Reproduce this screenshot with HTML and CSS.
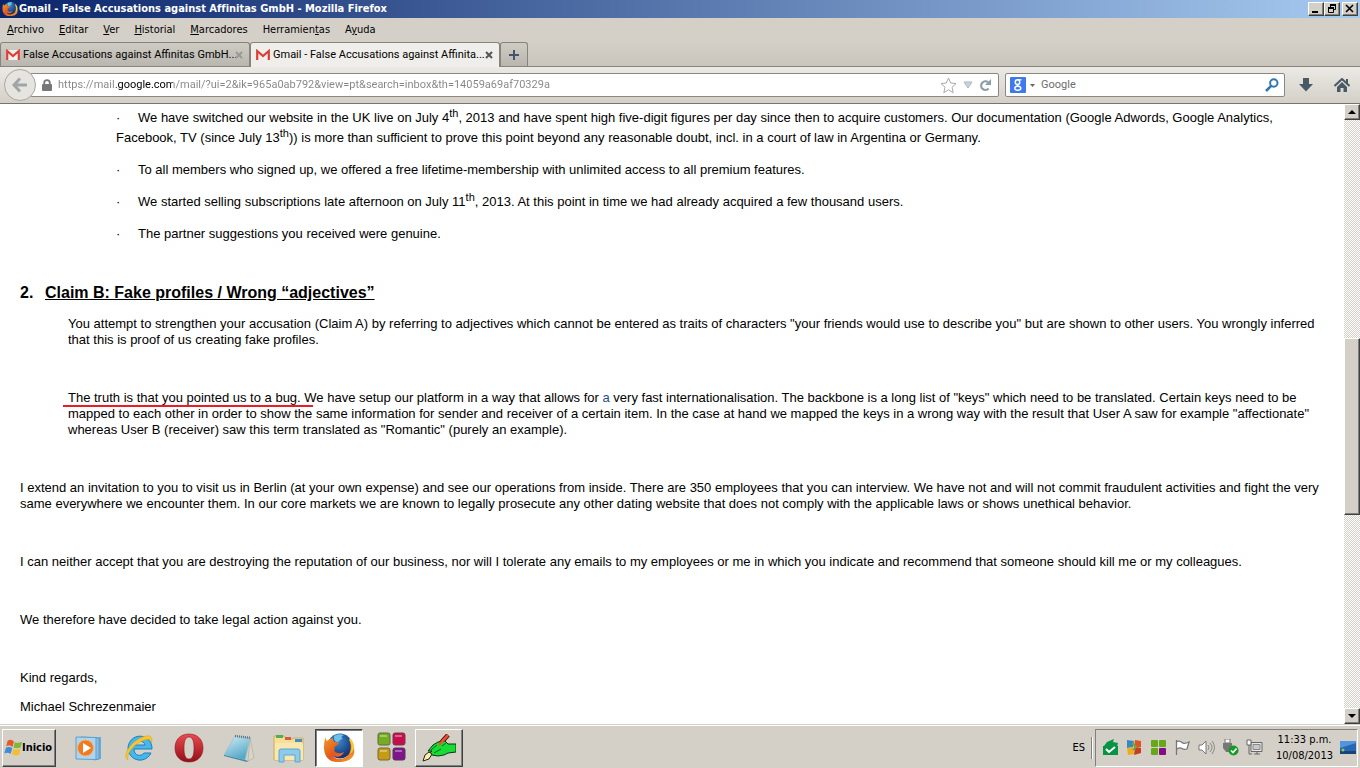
FILE: index.html
```html
<!DOCTYPE html>
<html lang="es">
<head>
<meta charset="utf-8">
<title>Gmail - False Accusations against Affinitas GmbH - Mozilla Firefox</title>
<link rel="stylesheet" href="styles.css">
</head>
<body>
<svg class="defs" width="0" height="0" aria-hidden="true">
  <defs>
    <symbol id="gmail" viewBox="0 0 14 12"><path d="M0 1h14v10H0z" fill="#f3f1ee"/><path d="M1.200 11V2l5.800 5 5.800-5v9" fill="none" stroke="#dc3f35" stroke-width="2.200"/></symbol>
    <symbol id="firefox" viewBox="0 0 32 32">
      <circle cx="17" cy="14" r="12.500" fill="url(#ffblue)"/>
      <path d="M11 4c3-2 7-2 10-1-3 1-3 3-1 4-4 0-3 3-6 3-3-1-3-4-3-6z" fill="#6fc0ea"/>
      <path d="M3 5c0 2 0 3 1 4 2-2 4-2 6-3 0 2 0 3 1 4 2 0 4 0 5 1-1 2-4 3-5 5 1 0 1 2 0 2 2 4 6 4 10 2-2 5-8 6-12 3 4 6 13 5 17-1 2-4 2-8 1-12 4 3 5 8 4 12-2 6-8 8-15 8C6 31 1 24 1 16 1 12 1 9 3 5z" fill="url(#fforange)"/>
      <path d="M26 8c3 4 3 9 1 14 3-2 4-5 4-8 0-3-2-6-5-9 1 1 1 2 0 3z" fill="#f8cc35"/>
    </symbol>
    <radialGradient id="ffblue" cx=".4" cy=".3" r=".7"><stop stop-color="#3d8cd0"/><stop offset="1" stop-color="#122e70"/></radialGradient>
    <linearGradient id="fforange" x1="0" y1="0" x2="1" y2="1"><stop stop-color="#f39a22"/><stop offset=".5" stop-color="#e3561d"/><stop offset="1" stop-color="#f5a52b"/></linearGradient>
    <symbol id="winflag" viewBox="0 0 20 20">
      <path d="M4 2c3-2 5-1 7 1L9.500 9C7 7 5 7 2.500 8z" fill="#e4582b"/>
      <path d="M12 3.500c3 1 5 1 8-.5l-1.500 6.500c-3 1-5 1-8 0z" fill="#7db83a"/>
      <path d="M2.200 9.500c3-1 5-1 7 .5L7.500 16.500C5 15 3 15 .3 16z" fill="#3d8dd6"/>
      <path d="M10.300 11c3 1 5 1 8 0l-1.500 6.500c-3 1-5 1-8-.5z" fill="#f5bd2c"/>
    </symbol>
    <symbol id="up" viewBox="0 0 8 4"><path d="M4 0l4 4H0z" fill="#000"/></symbol>
    <symbol id="down" viewBox="0 0 8 4"><path d="M0 0h8L4 4z" fill="#000"/></symbol>
  </defs>
</svg>

<header class="titlebar">
  <svg class="title-icon"><use href="#firefox"/></svg>
  <h1 class="title">Gmail - False Accusations against Affinitas GmbH - Mozilla Firefox</h1>
  <div class="window-buttons">
    <button class="win-btn" aria-label="Minimizar"><svg width="12" height="10"><path d="M2 7h6v2H2z"/></svg></button>
    <button class="win-btn" aria-label="Restaurar"><svg width="12" height="10"><path d="M4 0h6v2H4zM2 3h6v2H2z"/><path d="M4.500 1v2M9.500 1v4.500H8M2.500 4v4.500h5V4" fill="none" stroke="#000"/></svg></button>
    <button class="win-btn win-close" aria-label="Cerrar"><svg width="12" height="10"><path d="M2 1l7 7M9 1L2 8" stroke="#000" stroke-width="1.600"/></svg></button>
  </div>
</header>

<nav class="menubar">
  <button><u>A</u>rchivo</button><button><u>E</u>ditar</button><button><u>V</u>er</button><button><u>H</u>istorial</button><button><u>M</u>arcadores</button><button>Herramien<u>t</u>as</button><button>A<u>y</u>uda</button>
</nav>

<div class="tabs">
  <div class="tab">
    <svg class="favicon"><use href="#gmail"/></svg>
    <button class="tab-label">False Accusations against Affinitas GmbH...</button>
    <button class="tab-close faded" aria-label="Cerrar pestaña"><svg width="8" height="8"><path d="M1 1l6 6M7 1L1 7" stroke="currentColor" stroke-width="2"/></svg></button>
  </div>
  <div class="tab active">
    <svg class="favicon"><use href="#gmail"/></svg>
    <button class="tab-label">Gmail - False Accusations against Affinita...</button>
    <button class="tab-close" aria-label="Cerrar pestaña"><svg width="8" height="8"><path d="M1 1l6 6M7 1L1 7" stroke="currentColor" stroke-width="2"/></svg></button>
  </div>
  <button class="new-tab" aria-label="Nueva pestaña"><svg width="10" height="10"><path d="M5 0v10M0 5h10" stroke="#44576a" stroke-width="2"/></svg></button>
</div>

<div class="navbar">
  <button class="back" aria-label="Atrás"><svg width="18" height="16" viewBox="0 0 18 16"><path d="M9 1.500L3 8l6 6.500M3 8h13" fill="none" stroke="#a0a6a8" stroke-width="3"/></svg></button>
  <div class="url-box">
    <svg width="10" height="12"><path d="M2.200 6V4a2.800 2.800 0 0 1 5.600 0v2" fill="none" stroke="#777" stroke-width="1.800"/><rect y="5" width="10" height="7" rx="1" fill="#777"/></svg>
    <input class="url" aria-label="Dirección" value="https://mail.google.com/mail/?ui=2&amp;ik=965a0ab792&amp;view=pt&amp;search=inbox&amp;th=14059a69af70329a">
    <button aria-label="Añadir a marcadores"><svg width="17" height="17"><path d="M8.500 1l2.200 5 5.300.6-4 3.600 1.200 5.500-4.700-2.900-4.700 2.900L5 10.200 1 6.600 6.300 6z" fill="#fff" stroke="#aaa"/></svg></button>
    <button aria-label="Historial"><svg width="10" height="8"><path d="M1 1h8L5 7z" fill="#c9d5da" stroke="#aab8be"/></svg></button>
    <button aria-label="Recargar"><svg width="13" height="13"><path d="M9.600 9.600A4.300 4.300 0 1 1 9 3.200" fill="none" stroke="#8c9ea8" stroke-width="2.200"/><path d="M12 0v6H6z" fill="#8c9ea8"/></svg></button>
  </div>
  <div class="search-box">
    <button class="engine" aria-label="Motor de búsqueda"><svg width="16" height="16"><rect width="16" height="16" rx="1" fill="#3e79ee"/><ellipse cx="7.500" cy="5.200" rx="2.200" ry="2.400" fill="none" stroke="#fff" stroke-width="1.500"/><path d="M8 2.800h3.500" stroke="#fff" stroke-width="1.300"/><path d="M8 7.500q-1.500 1 .5 1.800" fill="none" stroke="#fff" stroke-width="1.300"/><ellipse cx="7.800" cy="11.300" rx="3" ry="2" fill="none" stroke="#fff" stroke-width="1.400"/></svg><svg width="5" height="3"><path d="M0 0h5L2.500 3z" fill="#666"/></svg></button>
    <input class="search" aria-label="Buscar" value="Google">
    <button aria-label="Buscar"><svg width="14" height="14"><circle cx="8.800" cy="5" r="3.700" fill="none" stroke="#2d78b4" stroke-width="2"/><path d="M6.200 7.800L1 13" stroke="#2d78b4" stroke-width="2.600"/></svg></button>
  </div>
  <button class="tool" aria-label="Descargas"><svg width="14" height="14"><path d="M4 0h6v6h4l-7 7.500L0 6h4z" fill="#495a67"/></svg></button>
  <button class="tool" aria-label="Inicio"><svg width="16" height="14"><path d="M.5 8L8 1l7.500 7" fill="none" stroke="#495a67" stroke-width="2"/><path d="M12 1h2v4h-2zM8 4l5 5v5H9.500v-4h-3v4H3V9z" fill="#495a67"/></svg></button>
</div>

<div class="viewport">
  <main class="page">
    <ul class="points">
      <li class="tall"><span class="dot">·</span>We have switched our website in the UK live on July 4<sup>th</sup>, 2013 and have spent high five-digit figures per day since then to acquire customers. Our documentation (Google Adwords, Google Analytics,<br>Facebook, TV (since July 13<sup>th</sup>)) is more than sufficient to prove this point beyond any reasonable doubt, incl. in a court of law in Argentina or Germany.</li>
      <li><span class="dot">·</span>To all members who signed up, we offered a free lifetime-membership with unlimited access to all premium features.</li>
      <li class="tall"><span class="dot">·</span>We started selling subscriptions late afternoon on July 11<sup>th</sup>, 2013. At this point in time we had already acquired a few thousand users.</li>
      <li><span class="dot">·</span>The partner suggestions you received were genuine.</li>
    </ul>
    <h2 class="claim"><span class="num">2.</span><u>Claim B: Fake profiles / Wrong “adjectives”</u></h2>
    <p class="indent">You attempt to strengthen your accusation (Claim A) by referring to adjectives which cannot be entered as traits of characters "your friends would use to describe you" but are shown to other users. You wrongly inferred<br>that this is proof of us creating fake profiles.</p>
    <p class="indent spaced"><span class="marked">The truth is that you pointed us to a bug. </span>We have setup our platform in a way that allows for <span class="blue">a</span> very fast internationalisation. The backbone is a long list of "keys" which need to be translated. Certain keys need to be<br>mapped to each other in order to show the same information for sender and receiver of a certain item. In the case at hand we mapped the keys in a wrong way with the result that User A saw for example "affectionate"<br>whereas User B (receiver) saw this term translated as "Romantic" (purely an example).</p>
    <p class="spaced">I extend an invitation to you to visit us in Berlin (at your own expense) and see our operations from inside. There are 350 employees that you can interview. We have not and will not commit fraudulent activities and fight the very<br>same everywhere we encounter them. In our core markets we are known to legally prosecute any other dating website that does not comply with the applicable laws or shows unethical behavior.</p>
    <p class="spaced">I can neither accept that you are destroying the reputation of our business, nor will I tolerate any emails to my employees or me in which you indicate and recommend that someone should kill me or my colleagues.</p>
    <p class="spaced">We therefore have decided to take legal action against you.</p>
    <p class="spaced">Kind regards,</p>
    <p>Michael Schrezenmaier</p>
  </main>
  <div class="scrollbar">
    <button class="scroll-btn" aria-label="Subir"><svg width="8" height="4"><use href="#up"/></svg></button>
    <div class="track-before"></div>
    <div class="thumb"></div>
    <div class="track-after"></div>
    <button class="scroll-btn" aria-label="Bajar"><svg width="8" height="4"><use href="#down"/></svg></button>
  </div>
</div>

<footer class="taskbar">
  <button class="start"><svg width="18" height="18"><use href="#winflag"/></svg>Inicio</button>
  <div class="launchers">
    <button class="launcher" aria-label="Reproductor multimedia"><svg width="28" height="28" viewBox="0 0 28 28"><path d="M10 4l16-1v22l-7 1z" fill="#6fa9d4"/><path d="M6 3l18 1v21l-5 1z" fill="#8ec1e6" stroke="#5d9bca"/><path d="M1 3l20 .5v22L1 25z" fill="#add5ef" stroke="#5e9fcd"/><circle cx="10.500" cy="14" r="8" fill="#ef7a22" stroke="#fbb26d"/><path d="M8 9v10l8-5z" fill="#fff"/></svg></button>
    <button class="launcher" aria-label="Internet Explorer"><svg width="32" height="30" viewBox="0 0 32 30"><path d="M28 20A12 12 0 1 1 29 16H11c0 7 7 8 10 4zM11 12h11c-1-5-9-5-11 0z" fill="#45b7ea" fill-rule="evenodd" stroke="#1b7fc0"/><path d="M5 27C-1 24 6 12 14 7c8-5 15-6 15 0 0 1 0 2-1 3 1-4-2-5-9-2C10 12 3 21 5 27z" fill="#f8c62e" stroke="#d9a118" stroke-width=".5"/></svg></button>
    <button class="launcher" aria-label="Opera"><svg width="30" height="30" viewBox="0 0 30 30"><defs><linearGradient id="opera" x2="0" y2="1"><stop stop-color="#ed4b50"/><stop offset="1" stop-color="#930e18"/></linearGradient></defs><path d="M15 1C6 1 1 7 1 15s5 14 14 14 14-6 14-14S24 1 15 1zm0 3c4 0 5 5 5 11s-1 11-5 11-5-5-5-11 1-11 5-11z" fill="url(#opera)" fill-rule="evenodd" stroke="#8e1720" stroke-width=".6"/></svg></button>
    <button class="launcher" aria-label="Bloc de notas"><svg width="32" height="30" viewBox="0 0 32 30"><defs><linearGradient id="note" x1="0" x2=".5" y2="1"><stop stop-color="#d4f0f7"/><stop offset="1" stop-color="#55a7c7"/></linearGradient></defs><path d="M27 5l4 20-6 3z" fill="#d9d4c8" stroke="#a6a08f" stroke-width=".5"/><path d="M12 3l15 2-5 22L1 22z" fill="url(#note)" stroke="#8ebccb" stroke-width=".6"/><path d="M1 22l21 5 3 1-1 1-23-6z" fill="#3d89a5"/><path d="M12 3l16 2" stroke="#64747b" stroke-width="2.500" stroke-dasharray="1 1"/></svg></button>
    <button class="launcher" aria-label="Explorador"><svg width="32" height="30" viewBox="0 0 32 30"><path d="M1 3h10l2 3h7l1-1h9v22H1z" fill="#f5e09a" stroke="#cfae58"/><path d="M3 2h7v3H3z" fill="#4db055"/><path d="M12 4h6v3h-6z" fill="#d95b3a"/><path d="M22 6h7v3h-7z" fill="#3e8ed0"/><path d="M2 10h28v17H2z" fill="#f9e8ae"/><path d="M6 29V18q0-2 2-2h17q2 0 2 2v11h-5v-7H11v7z" fill="#8ecaec" stroke="#5ca6d2"/></svg></button>
    <button class="launcher current" aria-label="Mozilla Firefox"><svg width="32" height="32"><use href="#firefox"/></svg></button>
    <button class="launcher apps" aria-label="Aplicación"><svg width="30" height="30"><rect x="2" y="2" width="12" height="12" rx="2" fill="#75ad20" stroke="#5d6b41"/><rect x="17" y="2" width="12" height="12" rx="2" fill="#c70d4c" stroke="#733b50"/><rect x="2" y="17" width="12" height="12" rx="2" fill="#c49c14" stroke="#766636"/><rect x="17" y="17" width="12" height="12" rx="2" fill="#81148b" stroke="#543559"/><path d="M4 5h7M19 5h7M4 20h7M19 20h7" stroke="#fff" stroke-opacity=".35" stroke-width="2"/></svg></button>
    <button class="launcher raised" aria-label="Editor"><svg width="34" height="28" viewBox="0 0 34 28"><path d="M26 1L10 19" stroke="#40100c" stroke-width="4.500"/><path d="M26 1L10 19" stroke="#ef5135" stroke-width="2.500"/><path d="M6 17l5-6 5-3 7-1 3 3h8v8l-8 1-4 2-6 1-6-1-3-1 3-3h-4z" fill="#18dc35" stroke="#06380c"/><path d="M9 16l6-5M12 19l7-4M24 9l-4 3" stroke="#076b13"/><path d="M26 1l-9 10" stroke="#ef5135" stroke-width="2.500"/><path d="M7 18l-4 3-2 6 6-2 3-5z" fill="#ffefa3" stroke="#222"/></svg></button>
  </div>
  <span class="lang">ES</span>
  <div class="tray">
    <svg width="17" height="17" viewBox="0 0 17 17"><path d="M1 7h15v9H1z" fill="#089344"/><path d="M2 7l3-4 7-3-1 3 5 1-1 4z" fill="#079447"/><path d="M4 10l3 3 6-5" fill="none" stroke="#fff" stroke-width="2"/></svg>
    <svg width="17" height="17" viewBox="0 0 17 17"><path d="M1 1l7 1-1 6-6 1z" fill="#3489be"/><path d="M9 1l6 1v6l-7 1z" fill="#e05324"/><path d="M1 9l6-1 1 7-6 1z" fill="#ecac1d"/><path d="M9 8l6 1v5l-7 2z" fill="#c83c22"/><path d="M6 4l4 4-3 3" fill="none" stroke="#69a744" stroke-width="2"/></svg>
    <svg width="17" height="17"><rect x="1" y="1" width="7" height="7" rx="1" fill="#65a91b"/><rect x="9" y="1" width="7" height="7" rx="1" fill="#65a91b"/><rect x="1" y="9" width="7" height="7" rx="1" fill="#65a91b"/><rect x="9" y="9" width="7" height="7" rx="1" fill="#850b83"/></svg>
    <svg width="17" height="17"><path d="M2.500 1v15M3 2.500q3-1 5 1t7-.5l-2 7q-3 1-5-.5t-5 .5" fill="#fff" stroke="#777" stroke-width="1.300"/></svg>
    <svg width="17" height="17"><path d="M1 6h3l4-4v13l-4-4H1z" fill="#fff" stroke="#777"/><path d="M10 6q2 2.500 0 5M12 4q4 4.500 0 9M14 2q5 6.500 0 13" fill="none" stroke="#888"/></svg>
    <svg width="17" height="17"><path d="M3 0h5v4H3z" fill="#fff" stroke="#777"/><path d="M1 4h9v5l-3 4H4L1 9z" fill="#777"/><circle cx="11.500" cy="11.500" r="5" fill="#159b25"/><path d="M9 11.500l2 2 3.500-4" fill="none" stroke="#fff" stroke-width="1.600"/></svg>
    <svg width="17" height="17"><path d="M5 3.500h11v9H5z" fill="#e7e7e5" stroke="#666"/><path d="M7 5.500h7v5H7z" fill="#c8cac8" stroke="#888"/><path d="M1 1h4v5H1z" fill="#fff" stroke="#666"/><path d="M3 6v9h3M8 15h6M11 13v2" fill="none" stroke="#666"/></svg>
    <time class="clock"><span>11:33 p.m.</span><span>10/08/2013</span></time>
    <button class="show-desktop" aria-label="Mostrar escritorio"><svg width="16" height="14"><path d="M0 0h16v11H0z" fill="#2668b6"/><path d="M0 7L16 2V0H0z" fill="#5395db"/><path d="M0 10h16v3H0z" fill="#174478"/><circle cx="3" cy="9" r="1.500" fill="#8acb47"/></svg></button>
  </div>
</footer>
</body>
</html>
```
FILE: styles.css
```css
* { box-sizing: border-box; }
body {
  margin: 0;
  height: 100vh;
  display: flex;
  flex-direction: column;
  overflow: hidden;
  background: #d4d0c8;
  color: #000;
  font: 11px/14px "DejaVu Sans Condensed", "DejaVu Sans", sans-serif;
}
button {
  margin: 0;
  padding: 0;
  border: 0;
  background: none;
  color: inherit;
  font: inherit;
  white-space: nowrap;
}
input {
  min-width: 0;
  border: 0;
  padding: 0;
  outline: 0;
  background: none;
  font: inherit;
}
svg { display: block; flex: none; }
.defs { position: absolute; }

/* window frame */
.titlebar {
  flex: none;
  height: 18px;
  display: flex;
  align-items: center;
  padding: 0 2px;
  gap: 1px;
  background: linear-gradient(90deg, #0a246a, #a6caf0);
}
.title-icon { width: 16px; height: 16px; }
.title {
  flex: 1;
  margin: 0;
  color: #fff;
  font-size: 11px;
  line-height: 18px;
  white-space: nowrap;
}
.window-buttons { display: flex; }
.win-btn {
  width: 16px;
  height: 14px;
  display: flex;
  align-items: center;
  justify-content: center;
}
.win-close { margin-left: 2px; }
.win-btn, .scroll-btn, .thumb {
  background: #d4d0c8;
  border: 1px solid;
  border-color: #fff #404040 #404040 #fff;
  box-shadow: inset -1px -1px #808080;
}
.menubar {
  flex: none;
  height: 24px;
  display: flex;
  align-items: center;
  padding: 0 7px;
  gap: 15px;
}

/* tabs */
.tabs {
  flex: none;
  height: 25px;
  display: flex;
  background: linear-gradient(#d4d0c8, #c9c5bc);
  border-bottom: 1px solid #87847e;
}
.tabs, .navbar { font-family: Roboto, "Noto Sans", sans-serif; }
.tab, .new-tab {
  border: 1px solid #87847e;
  border-bottom: 0;
  border-radius: 3px 3px 0 0;
  background: linear-gradient(#cfccc4, #b9b6af);
}
.tab {
  width: 250px;
  display: flex;
  align-items: center;
  padding: 0 6px 0 5px;
  gap: 3px;
}
.tab.active {
  margin-bottom: -1px;
  background: #f0eeea;
}
.favicon { width: 14px; height: 12px; }
.tab-label { flex: 1; min-width: 0; text-align: left; }
.tab-close { color: #555; }
.faded { color: #999; }
.new-tab {
  width: 28px;
  display: flex;
  align-items: center;
  justify-content: center;
}

/* toolbar */
.navbar {
  flex: none;
  height: 37px;
  display: flex;
  align-items: center;
  padding: 0 10px 0 4px;
  background: linear-gradient(#eceae5, #d4d0c8);
  border-bottom: 1px solid #77746f;
}
.back {
  z-index: 1;
  width: 32px;
  height: 32px;
  display: flex;
  align-items: center;
  justify-content: center;
  border: 1px solid #aaa7a1;
  border-radius: 50%;
  background: #e6e4df;
}
.url-box, .search-box {
  height: 24px;
  display: flex;
  align-items: center;
  border: 1px solid #8b8882;
  border-radius: 2px;
  background: #fff;
}
.url-box {
  flex: 1;
  margin-left: -6px;
  padding: 0 6px 0 11px;
  gap: 6px;
}
.url {
  flex: 1;
  background: linear-gradient(90deg, #858585 58px, #000 58px, #000 115px, #858585 115px);
  background-clip: text;
  -webkit-background-clip: text;
  color: transparent;
}
.search-box {
  width: 280px;
  margin-left: 6px;
  margin-right: 6px;
  padding: 0 5px 0 4px;
  gap: 6px;
}
.engine { display: flex; align-items: center; gap: 4px; }
.search { flex: 1; color: #6d6d6d; }
.tool {
  width: 30px;
  display: flex;
  justify-content: center;
}
.tool + .tool { margin-left: 6px; margin-right: -7px; }

/* message */
.viewport {
  flex: 1;
  min-height: 0;
  display: flex;
  background: #fff;
}
.page {
  flex: 1;
  min-width: 0;
  overflow: hidden;
  padding: 4px 0 0 20px;
  font: 13px/16px "Liberation Sans", Arial, sans-serif;
  white-space: nowrap;
}
.points { margin: 0 0 42px; padding: 0 0 0 96px; list-style: none; }
.points li { margin-bottom: 14px; }
.points .tall { line-height: 20px; }
.dot { display: inline-block; width: 22px; }
sup { font-size: 11px; line-height: 0; }
.claim { margin: 0 0 14px; font-size: 16px; line-height: 18px; }
.num { display: inline-block; width: 25px; }
.page p { margin: 0 0 13px; }
.page .indent { padding-left: 48px; }
.page .spaced { margin-top: 42px; }
.blue { color: #1f4e8c; }
.marked { position: relative; }
.marked::after {
  content: "";
  position: absolute;
  left: -5px;
  right: -9px;
  bottom: -2px;
  height: 2px;
  background: #ed1c24;
}

/* scrollbar */
.scrollbar {
  width: 16px;
  display: flex;
  flex-direction: column;
  background: repeating-conic-gradient(#d4d0c8 0 25%, #fff 0 50%) 0 0 / 2px 2px;
}
.scroll-btn {
  height: 16px;
  display: flex;
  align-items: center;
  justify-content: center;
}
.track-before { flex: 218; }
.thumb { flex: 176; }
.track-after { flex: 193; }

/* taskbar */
.taskbar {
  flex: none;
  height: 44px;
  display: flex;
  align-items: center;
  padding: 2px 2px 0;
  border-top: 1px solid #d4d0c8;
  box-shadow: inset 0 1px #fff;
}
.start {
  width: 54px;
  height: 38px;
  display: flex;
  align-items: center;
  padding-left: 1px;
  font-weight: bold;
}
.start, .raised {
  border: 1px solid;
  border-color: #fff #404040 #404040 #fff;
  box-shadow: inset -1px -1px #808080;
}
.launchers { flex: 1; display: flex; gap: 2px; margin-left: 9px; }
.launcher {
  width: 48px;
  height: 38px;
  display: flex;
  align-items: center;
  justify-content: center;
}
.current {
  background: #fff;
  border: 1px solid;
  border-color: #404040 #fff #fff #404040;
  box-shadow: inset 1px 1px #808080;
}
.apps { padding: 0 0 4px 4px; }
.lang {
  padding-right: 6px;
  line-height: 22px;
  border-right: 1px solid #808080;
  box-shadow: 1px 0 #fff;
}
.tray {
  height: 38px;
  display: flex;
  align-items: center;
  gap: 7px;
  margin-left: 3px;
  padding: 0 1px 0 6px;
  border: 1px solid;
  border-color: #808080 #fff #fff #808080;
}
.clock { display: flex; flex-direction: column; align-items: center; line-height: 16px; margin-left: 6px; }
```
